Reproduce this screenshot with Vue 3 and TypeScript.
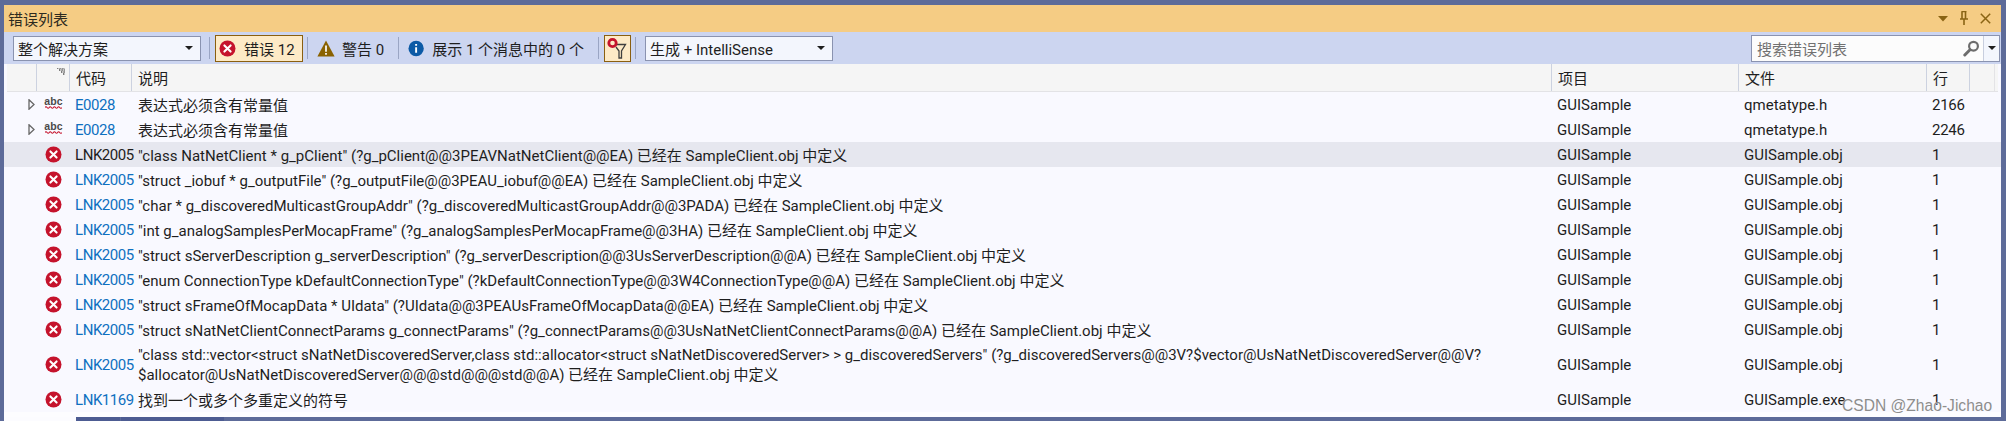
<script setup lang="ts">
interface ErrorRow {
  kind: 'abc' | 'error'
  code: string
  text: string
  project: string
  file: string
  line: string
  selected?: boolean
  tall?: boolean
}

const linkRow = (text: string, extra: Partial<ErrorRow> = {}): ErrorRow => ({
  kind: 'error',
  code: 'LNK2005',
  text,
  project: 'GUISample',
  file: 'GUISample.obj',
  line: '1',
  ...extra,
})

const rows: ErrorRow[] = [
  { kind: 'abc', code: 'E0028', text: '表达式必须含有常量值', project: 'GUISample', file: 'qmetatype.h', line: '2166' },
  { kind: 'abc', code: 'E0028', text: '表达式必须含有常量值', project: 'GUISample', file: 'qmetatype.h', line: '2246' },
  linkRow('"class NatNetClient * g_pClient" (?g_pClient@@3PEAVNatNetClient@@EA) 已经在 SampleClient.obj 中定义', { selected: true }),
  linkRow('"struct _iobuf * g_outputFile" (?g_outputFile@@3PEAU_iobuf@@EA) 已经在 SampleClient.obj 中定义'),
  linkRow('"char * g_discoveredMulticastGroupAddr" (?g_discoveredMulticastGroupAddr@@3PADA) 已经在 SampleClient.obj 中定义'),
  linkRow('"int g_analogSamplesPerMocapFrame" (?g_analogSamplesPerMocapFrame@@3HA) 已经在 SampleClient.obj 中定义'),
  linkRow('"struct sServerDescription g_serverDescription" (?g_serverDescription@@3UsServerDescription@@A) 已经在 SampleClient.obj 中定义'),
  linkRow('"enum ConnectionType kDefaultConnectionType" (?kDefaultConnectionType@@3W4ConnectionType@@A) 已经在 SampleClient.obj 中定义'),
  linkRow('"struct sFrameOfMocapData * UIdata" (?UIdata@@3PEAUsFrameOfMocapData@@EA) 已经在 SampleClient.obj 中定义'),
  linkRow('"struct sNatNetClientConnectParams g_connectParams" (?g_connectParams@@3UsNatNetClientConnectParams@@A) 已经在 SampleClient.obj 中定义'),
  linkRow('"class std::vector<struct sNatNetDiscoveredServer,class std::allocator<struct sNatNetDiscoveredServer> > g_discoveredServers" (?g_discoveredServers@@3V?$vector@UsNatNetDiscoveredServer@@V?\n$allocator@UsNatNetDiscoveredServer@@@std@@@std@@A) 已经在 SampleClient.obj 中定义', { tall: true }),
  { kind: 'error', code: 'LNK1169', text: '找到一个或多个多重定义的符号', project: 'GUISample', file: 'GUISample.exe', line: '1' },
]
</script>

<template>
  <div class="window">
    <div class="panel">
      <header class="title">
        <span class="title-text">错误列表</span>
        <div class="title-icons">
          <svg width="10" height="6" viewBox="0 0 10 6"><path d="M0 0h10L5 5.5z" fill="#8a6414" /></svg>
          <svg width="10" height="15" viewBox="0 0 10 15"><path d="M2.5 .5h5M3 .5v7M6.5 .5v7M1 8h8M5 8v6" fill="none" stroke="#8a6414" stroke-width="1.6" /></svg>
          <svg width="11" height="11" viewBox="0 0 11 11"><path d="M.8 .8l9.4 9.4M10.2 .8L.8 10.2" fill="none" stroke="#8a6414" stroke-width="1.5" /></svg>
        </div>
      </header>

      <div class="toolbar">
        <div class="combo">
          <span>整个解决方案</span>
          <svg class="caret" width="8" height="4" viewBox="0 0 8 4"><path d="M0 0h8L4 4z" fill="#1e1e1e" /></svg>
        </div>
        <i class="sep sep-a"></i>
        <div class="toggle toggle-errors">
          <svg width="17" height="17" viewBox="0 0 17 17"><circle cx="8.5" cy="8.5" r="8" fill="#c5132c" /><path d="M5.4 5.4l6.2 6.2M11.6 5.4l-6.2 6.2" stroke="#fff" stroke-width="2.1" stroke-linecap="round" /></svg>
          <span>错误 12</span>
        </div>
        <i class="sep sep-b"></i>
        <div class="plain plain-warn">
          <svg width="18" height="17" viewBox="0 0 18 17"><path d="M9 .5l8.6 16H.4z" fill="#8a6200" /><path d="M9 5.5v6.2M9 13v1.8" stroke="#fff" stroke-width="1.7" /></svg>
          <span>警告 0</span>
        </div>
        <i class="sep sep-c"></i>
        <div class="plain plain-info">
          <svg width="17" height="17" viewBox="0 0 17 17"><circle cx="8.5" cy="8.5" r="8" fill="#0c5aa6" /><path d="M8.5 7.2v5.8M8.5 3.8v1.9" stroke="#fff" stroke-width="2" /></svg>
          <span>展示 1 个消息中的 0 个</span>
        </div>
        <i class="sep sep-d"></i>
        <div class="toggle toggle-filter">
          <svg width="25" height="25" viewBox="0 0 25 25">
            <path d="M11 8.5h9.5l-4 6.5v7h-2.5v-7l-3-4" fill="#fdeac6" stroke="#3f3f3f" stroke-width="1.3" />
            <circle cx="7.5" cy="7" r="3.7" fill="#fdeac6" stroke="#c5132c" stroke-width="2.8" />
          </svg>
        </div>
        <i class="sep sep-e"></i>
        <div class="combo">
          <span>生成 + IntelliSense</span>
          <svg class="caret" width="8" height="4" viewBox="0 0 8 4"><path d="M0 0h8L4 4z" fill="#1e1e1e" /></svg>
        </div>
        <div class="search">
          <span class="search-text">搜索错误列表</span>
          <svg class="search-glass" width="17" height="17" viewBox="0 0 17 17"><circle cx="10.5" cy="6.2" r="4.4" fill="none" stroke="#6d6d6d" stroke-width="2.2" /><path d="M7 9.8L1.8 15" stroke="#6d6d6d" stroke-width="3" stroke-linecap="round" /></svg>
          <div class="search-drop"><svg width="8" height="4" viewBox="0 0 8 4"><path d="M0 0h8L4 4z" fill="#1e1e1e" /></svg></div>
        </div>
      </div>

      <div class="table">
        <div class="grid head">
          <div class="hcell"></div>
          <div class="hcell sort">
            <svg width="8" height="7" viewBox="0 0 8 7"><path d="M0 0h8M2 2h6M4 4h4M6 6h2" stroke="#555" stroke-width="1.4" stroke-dasharray="1 .6" /></svg>
          </div>
          <div class="hcell">代码</div>
          <div class="hcell">说明</div>
          <div class="hcell">项目</div>
          <div class="hcell">文件</div>
          <div class="hcell">行</div>
          <div class="hcell"></div>
        </div>
        <div
          v-for="(row, index) in rows"
          :key="index"
          class="grid row"
          :class="{ selected: row.selected, tall: row.tall }"
        >
          <div class="cell expander">
            <svg v-if="row.kind === 'abc'" width="7" height="11" viewBox="0 0 7 11"><path d="M1 .8L6 5.5 1 10.2z" fill="#f9f9ff" stroke="#666" stroke-width="1.3" /></svg>
          </div>
          <div class="cell icon">
            <span v-if="row.kind === 'abc'" class="abc">
              <span class="abc-text">abc</span>
              <svg width="17" height="3" viewBox="0 0 17 3"><path d="M0 1.5q1-1.6 2.1 0t2.1 0 2.1 0 2.1 0 2.1 0 2.1 0 2.1 0 2.1 0" fill="none" stroke="#c5132c" stroke-width="1.1" /></svg>
            </span>
            <svg v-else width="17" height="17" viewBox="0 0 17 17"><circle cx="8.5" cy="8.5" r="8" fill="#c5132c" /><path d="M5.4 5.4l6.2 6.2M11.6 5.4l-6.2 6.2" stroke="#fff" stroke-width="2.1" stroke-linecap="round" /></svg>
          </div>
          <div class="cell code">{{ row.code }}</div>
          <div class="cell desc">{{ row.text }}</div>
          <div class="cell">{{ row.project }}</div>
          <div class="cell">{{ row.file }}</div>
          <div class="cell num">{{ row.line }}</div>
          <div></div>
        </div>
      </div>
      <div class="table-end"></div>
    </div>

    <div class="footer">
      <div class="footer-gap"></div>
      <div class="footer-tab footer-tab-a"></div>
      <div class="footer-tab footer-tab-b"></div>
    </div>

    <div class="watermark">CSDN @Zhao-Jichao</div>
  </div>
</template>

<style scoped>
.window {
  position: relative;
  box-sizing: border-box;
  width: 2006px;
  height: 421px;
  display: flex;
  flex-direction: column;
  padding-top: 5px;
  background: #5d6b99;
  overflow: hidden;
  font-family: Roboto, "Noto Sans CJK SC", sans-serif;
  font-size: 15px;
  color: #1e1e1e;
}
.panel {
  height: 412px;
  margin: 0 5px 0 4px;
  display: flex;
  flex-direction: column;
}
.title {
  height: 27px;
  flex: none;
  display: flex;
  align-items: center;
  justify-content: space-between;
  padding: 0 10px 0 4px;
  background: #f5cc84;
}
.title-text {
  color: #2d2a20;
}
.title-icons {
  display: flex;
  align-items: center;
  gap: 11px;
}
.toolbar {
  height: 32px;
  flex: none;
  display: flex;
  align-items: center;
  padding-left: 9px;
  background: #ccd5f0;
  white-space: nowrap;
}
.combo {
  box-sizing: border-box;
  width: 188px;
  height: 25px;
  flex: none;
  display: flex;
  align-items: center;
  justify-content: space-between;
  padding: 0 6px 0 4px;
  border: 1px solid #8a93b0;
  background: #f3f6fd;
}
.caret {
  margin-right: 1px;
}
.sep {
  width: 1px;
  height: 22px;
  flex: none;
  background: #9aa5c4;
}
.sep-a { margin: 0 5px 0 8px; }
.sep-b { margin: 0 9px 0 4px; }
.sep-c { margin: 0 9px 0 5px; }
.sep-d { margin: 0 5px 0 14px; }
.sep-e { margin: 0 9px 0 4px; }
.toggle {
  box-sizing: border-box;
  height: 27px;
  flex: none;
  display: flex;
  align-items: center;
  border: 1px solid #8a5f10;
  background: #fdeac6;
}
.toggle-errors {
  width: 88px;
  gap: 8px;
  padding-left: 3px;
}
.toggle-filter {
  width: 27px;
  justify-content: center;
}
.plain {
  flex: none;
  display: flex;
  align-items: center;
}
.plain-warn {
  width: 76px;
  gap: 7px;
}
.plain-info {
  width: 176px;
  gap: 8px;
}
.search {
  box-sizing: border-box;
  width: 249px;
  height: 27px;
  margin-left: auto;
  margin-right: 1px;
  flex: none;
  display: flex;
  align-items: center;
  padding-left: 5px;
  border: 1px solid #8a93b0;
  background: #fcfcfc;
}
.search-text {
  color: #717171;
}
.search-glass {
  margin-left: auto;
  margin-right: 3px;
}
.search-drop {
  width: 15px;
  height: 100%;
  flex: none;
  display: flex;
  align-items: center;
  justify-content: center;
  border-left: 1px solid #c8cede;
  background: #f3f6fd;
}
.table {
  flex: 1;
  padding-left: 3px;
  background: #f9f9ff;
}
.table-end {
  height: 5px;
  flex: none;
  background: #fdfdff;
}
.grid {
  display: grid;
  grid-template-columns: 30px 33px 62px 1420px 187px 188px 43px 25px;
}
.head {
  height: 28px;
  box-sizing: border-box;
  margin-right: 3px;
  border-bottom: 1px solid #e3e3e6;
  background: #f5f5f5;
}
.hcell {
  display: flex;
  align-items: center;
  padding-left: 6px;
  border-right: 1px solid #ccd2e0;
}
.hcell:last-child {
  border-right: 1px solid #e3e3e6;
}
.sort {
  align-items: flex-start;
  justify-content: flex-end;
  padding: 4px 4px 0 0;
}
.row {
  height: 25px;
  margin-left: -3px;
  padding-left: 3px;
}
.row.tall {
  height: 45px;
  line-height: 20px;
}
.row.selected {
  background: #e6e7ef;
}
.cell {
  display: flex;
  align-items: center;
  padding-left: 5px;
  white-space: pre;
  min-width: 0;
}
.code {
  padding-left: 5px;
  letter-spacing: -0.45px;
  color: #0e70c0;
}
.num {
  letter-spacing: -0.3px;
}
.selected .code {
  color: #1e1e1e;
}
.desc {
  padding-left: 6px;
}
.expander {
  justify-content: flex-end;
  padding: 0 2px 0 0;
}
.icon {
  justify-content: center;
  padding: 0;
}
.abc {
  display: flex;
  flex-direction: column;
  align-items: center;
  margin-top: -3px;
}
.abc-text {
  font-family: "Liberation Sans", sans-serif;
  font-size: 10.5px;
  font-weight: 700;
  line-height: 9px;
  letter-spacing: 0.2px;
  color: #4a4a4a;
}
.footer {
  height: 4px;
  flex: none;
  display: flex;
  padding-left: 4px;
}
.footer-gap {
  width: 72px;
  background: #fcfcff;
}
.footer-tab {
  background: #4d5c92;
}
.footer-tab-a {
  width: 44px;
  margin-right: 1px;
}
.footer-tab-b {
  width: 103px;
}
.watermark {
  position: absolute;
  left: 1842px;
  top: 397px;
  font-family: "Liberation Sans", sans-serif;
  font-size: 15.6px;
  line-height: 18px;
  color: #8d8d8d;
  text-shadow: 0 0 1px #fff;
}
</style>
